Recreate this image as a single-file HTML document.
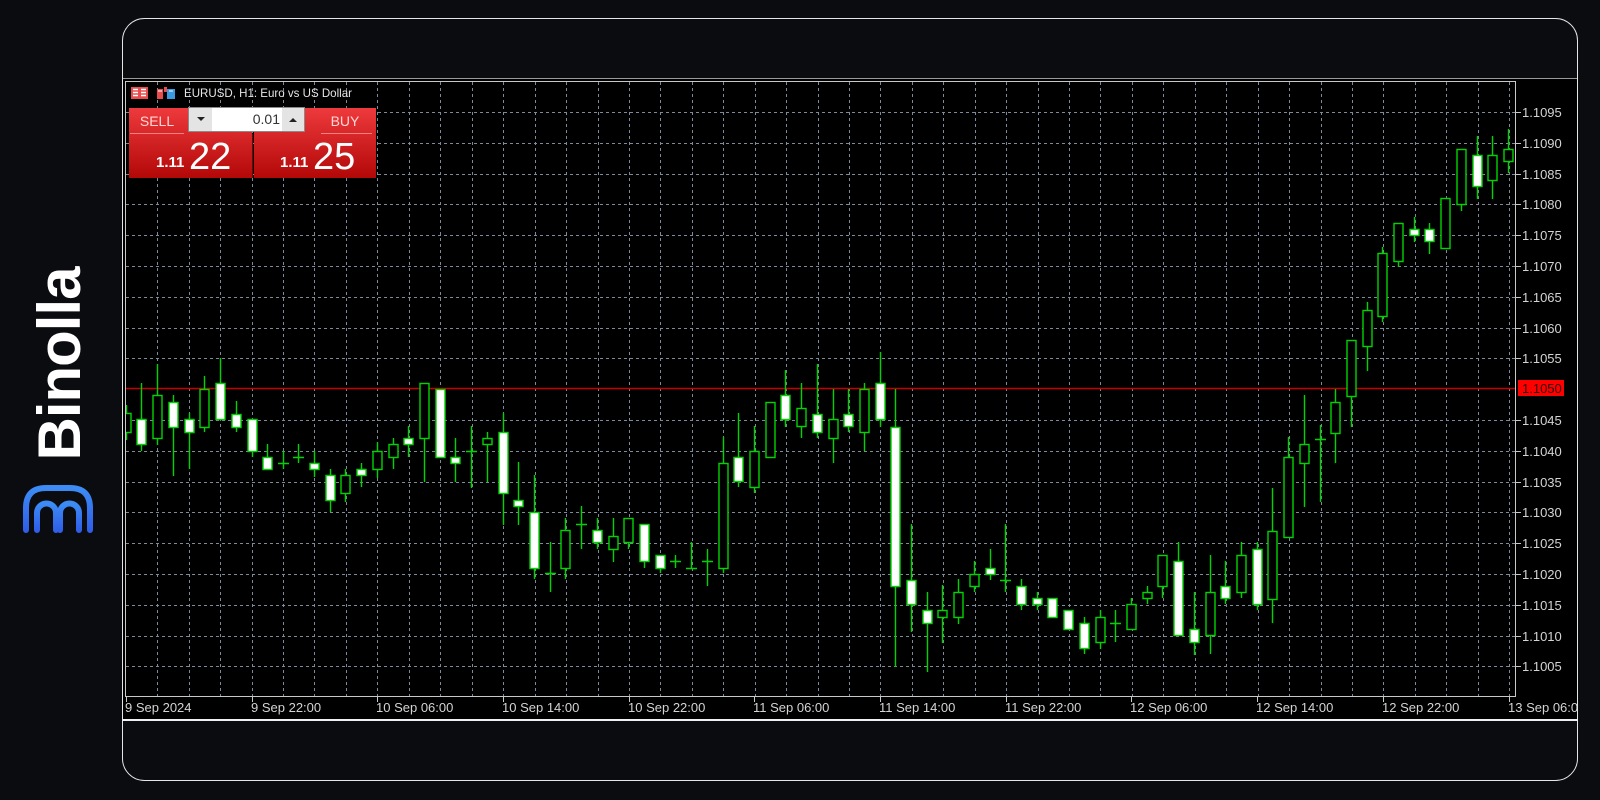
<!DOCTYPE html>
<html><head><meta charset="utf-8"><style>
html,body{margin:0;padding:0;background:#0b0c10;width:1600px;height:800px;overflow:hidden}
svg{display:block}
</style></head><body>
<svg width="1600" height="800" viewBox="0 0 1600 800" xmlns="http://www.w3.org/2000/svg" font-family="'Liberation Sans',sans-serif">
<defs>
<linearGradient id="lg" x1="0" y1="0" x2="0" y2="1"><stop offset="0" stop-color="#3d8cf5"/><stop offset="1" stop-color="#2f5fe8"/></linearGradient>
<linearGradient id="rg" x1="0" y1="0" x2="0" y2="1"><stop offset="0" stop-color="#ee3a3c"/><stop offset="1" stop-color="#b30808"/></linearGradient>
<clipPath id="plot"><rect x="126" y="82" width="1390" height="615"/></clipPath>
<clipPath id="chartc"><rect x="123" y="79" width="1454" height="641"/></clipPath>
</defs>
<rect x="0" y="0" width="1600" height="800" fill="#0b0c10"/>
<rect x="122.5" y="18.5" width="1455" height="762" rx="22" ry="22" fill="#0b0c10" stroke="#e6e6e6" stroke-width="1"/>
<rect x="123" y="78" width="1454" height="643" fill="#000"/>
<line x1="123" y1="78.5" x2="1577" y2="78.5" stroke="#9a9a9a"/>
<line x1="122" y1="720" x2="1578" y2="720" stroke="#f0f0f0" stroke-width="2"/>
<!-- logo -->
<text transform="translate(80,364) rotate(-90)" text-anchor="middle" font-size="60" font-weight="bold" fill="#fff" letter-spacing="-1">Binolla</text>
<g transform="translate(22,484)" fill="none" stroke="url(#lg)" stroke-width="6" stroke-linecap="round">
<path d="M4 46 V24 Q4 4 24 4 H48 Q68 4 68 24 V46"/>
<path d="M15 46 V29 a9.5 9.5 0 0 1 19 0 V46"/>
<path d="M38 46 V29 a9.5 9.5 0 0 1 19 0 V46"/>
</g>
<!-- grid -->
<g stroke="#7d8a99" stroke-width="1" stroke-dasharray="3,3" clip-path="url(#plot)">
<path d="M126 112.5H1516M126 143.5H1516M126 174.5H1516M126 204.5H1516M126 235.5H1516M126 266.5H1516M126 297.5H1516M126 328.5H1516M126 358.5H1516M126 420.5H1516M126 451.5H1516M126 482.5H1516M126 512.5H1516M126 543.5H1516M126 574.5H1516M126 605.5H1516M126 636.5H1516M126 666.5H1516"/>
<path d="M157.5 82V697M189.5 82V697M220.5 82V697M252.5 82V697M283.5 82V697M314.5 82V697M346.5 82V697M377.5 82V697M409.5 82V697M440.5 82V697M472.5 82V697M503.5 82V697M535.5 82V697M566.5 82V697M598.5 82V697M629.5 82V697M660.5 82V697M692.5 82V697M723.5 82V697M755.5 82V697M786.5 82V697M818.5 82V697M849.5 82V697M880.5 82V697M912.5 82V697M943.5 82V697M975.5 82V697M1006.5 82V697M1038.5 82V697M1069.5 82V697M1100.5 82V697M1132.5 82V697M1163.5 82V697M1195.5 82V697M1226.5 82V697M1258.5 82V697M1289.5 82V697M1321.5 82V697M1352.5 82V697M1383.5 82V697M1415.5 82V697M1446.5 82V697M1478.5 82V697M1509.5 82V697"/>
</g>
<line x1="126" y1="388.5" x2="1516" y2="388.5" stroke="#c40000" stroke-width="1.5"/>
<g clip-path="url(#plot)" stroke="#00d400" stroke-width="1.4">
<g fill="#fff">
<path d="M141.5 383V451M173.5 395V476M189.5 413V469M220.5 358V419M236.5 401V432M252.5 419V457M267.5 444V469M314.5 451V477M330.5 469V512M361.5 463V487M408.5 426V457M440.5 389V457M455.5 438V482M503.5 413V525M518.5 462V525M534.5 475V579M597.5 518V549M644.5 524V568M660.5 555V573M738.5 413V487M785.5 370V427M817.5 364V438M848.5 389V432M880.5 352V427M895.5 389V667M911.5 524V632M927.5 592V672M990.5 549V580M1021.5 579V610M1037.5 592V610M1052.5 598V617M1068.5 610V629M1084.5 617V654M1178.5 542V635M1194.5 592V655M1225.5 561V604M1257.5 542V610M1414.5 217V242M1429.5 223V254M1477.5 136V199"/>
<rect x="137" y="419.5" width="9" height="25"/><rect x="169" y="402.5" width="9" height="25"/><rect x="185" y="419.5" width="9" height="13"/><rect x="216" y="383.5" width="9" height="36"/><rect x="232" y="414.5" width="9" height="13"/><rect x="248" y="419.5" width="9" height="32"/><rect x="263" y="457.5" width="9" height="12"/><rect x="310" y="463.5" width="9" height="6"/><rect x="326" y="475.5" width="9" height="25"/><rect x="357" y="469.5" width="9" height="6"/><rect x="404" y="438.5" width="9" height="6"/><rect x="436" y="389.5" width="9" height="68"/><rect x="451" y="457.5" width="9" height="6"/><rect x="499" y="432.5" width="9" height="61"/><rect x="514" y="500.5" width="9" height="6"/><rect x="530" y="512.5" width="9" height="56"/><rect x="593" y="530.5" width="9" height="12"/><rect x="640" y="524.5" width="9" height="37"/><rect x="656" y="555.5" width="9" height="13"/><rect x="734" y="457.5" width="9" height="24"/><rect x="781" y="395.5" width="9" height="24"/><rect x="813" y="414.5" width="9" height="18"/><rect x="844" y="414.5" width="9" height="12"/><rect x="876" y="383.5" width="9" height="36"/><rect x="891" y="427.5" width="9" height="159"/><rect x="907" y="580.5" width="9" height="24"/><rect x="923" y="610.5" width="9" height="13"/><rect x="986" y="568.5" width="9" height="6"/><rect x="1017" y="586.5" width="9" height="18"/><rect x="1033" y="598.5" width="9" height="6"/><rect x="1048" y="598.5" width="9" height="19"/><rect x="1064" y="610.5" width="9" height="19"/><rect x="1080" y="623.5" width="9" height="25"/><rect x="1174" y="561.5" width="9" height="74"/><rect x="1190" y="629.5" width="9" height="13"/><rect x="1221" y="586.5" width="9" height="12"/><rect x="1253" y="549.5" width="9" height="55"/><rect x="1410" y="229.5" width="9" height="6"/><rect x="1425" y="229.5" width="9" height="12"/><rect x="1473" y="155.5" width="9" height="31"/>
</g>
<g fill="#000">
<path d="M126.5 405V440M157.5 364V445M204.5 376V432M345.5 469V502M377.5 442V478M393.5 438V469M424.5 383V482M487.5 432V482M565.5 518V579M613.5 518V562M628.5 518V549M723.5 437V573M754.5 426V493M770.5 402V457M801.5 383V438M833.5 389V463M864.5 383V451M942.5 585V643M958.5 579V624M974.5 561V592M1100.5 610V649M1131.5 598V629M1147.5 586V604M1162.5 555V598M1210.5 555V654M1241.5 542V598M1272.5 488V623M1288.5 437V537M1304.5 395V507M1335.5 389V463M1351.5 340V427M1367.5 302V371M1382.5 247V322M1398.5 223V267M1445.5 198V248M1461.5 149V211M1492.5 136V199M1508.5 129V173"/>
<rect x="122" y="413.5" width="9" height="19"/><rect x="153" y="395.5" width="9" height="43"/><rect x="200" y="389.5" width="9" height="38"/><rect x="341" y="475.5" width="9" height="18"/><rect x="373" y="451.5" width="9" height="18"/><rect x="389" y="444.5" width="9" height="13"/><rect x="420" y="383.5" width="9" height="55"/><rect x="483" y="438.5" width="9" height="6"/><rect x="561" y="530.5" width="9" height="38"/><rect x="609" y="536.5" width="9" height="13"/><rect x="624" y="518.5" width="9" height="24"/><rect x="719" y="463.5" width="9" height="105"/><rect x="750" y="451.5" width="9" height="36"/><rect x="766" y="402.5" width="9" height="55"/><rect x="797" y="408.5" width="9" height="18"/><rect x="829" y="419.5" width="9" height="19"/><rect x="860" y="389.5" width="9" height="43"/><rect x="938" y="610.5" width="9" height="7"/><rect x="954" y="592.5" width="9" height="25"/><rect x="970" y="574.5" width="9" height="12"/><rect x="1096" y="617.5" width="9" height="25"/><rect x="1127" y="604.5" width="9" height="25"/><rect x="1143" y="592.5" width="9" height="6"/><rect x="1158" y="555.5" width="9" height="31"/><rect x="1206" y="592.5" width="9" height="43"/><rect x="1237" y="555.5" width="9" height="37"/><rect x="1268" y="531.5" width="9" height="68"/><rect x="1284" y="457.5" width="9" height="80"/><rect x="1300" y="444.5" width="9" height="19"/><rect x="1331" y="402.5" width="9" height="31"/><rect x="1347" y="340.5" width="9" height="56"/><rect x="1363" y="310.5" width="9" height="36"/><rect x="1378" y="253.5" width="9" height="63"/><rect x="1394" y="223.5" width="9" height="38"/><rect x="1441" y="198.5" width="9" height="50"/><rect x="1457" y="149.5" width="9" height="55"/><rect x="1488" y="155.5" width="9" height="25"/><rect x="1504" y="149.5" width="9" height="12"/>
</g>
<path fill="none" d="M283.5 451V469M278 463.5H289M298.5 444V463M293 457.5H304M471.5 426V488M466 451.5H477M550.5 542V592M545 573.5H556M581.5 506V549M576 524.5H587M675.5 555V568M670 561.5H681M691.5 542V568M686 568.5H697M707.5 549V586M702 561.5H713M1005.5 524V592M1000 580.5H1011M1115.5 610V642M1110 623.5H1121M1320.5 425V502M1315 439.5H1326"/>
</g>
<rect x="125.5" y="81.5" width="1390" height="615" fill="none" stroke="#c8c8c8" stroke-width="1"/>
<g stroke="#c8c8c8"><path d="M1516 112.5h5M1516 143.5h5M1516 174.5h5M1516 204.5h5M1516 235.5h5M1516 266.5h5M1516 297.5h5M1516 328.5h5M1516 358.5h5M1516 420.5h5M1516 451.5h5M1516 482.5h5M1516 512.5h5M1516 543.5h5M1516 574.5h5M1516 605.5h5M1516 636.5h5M1516 666.5h5"/></g>
<g font-size="13" fill="#d4d4d4">
<text x="1522" y="117">1.1095</text><text x="1522" y="148">1.1090</text><text x="1522" y="179">1.1085</text><text x="1522" y="209">1.1080</text><text x="1522" y="240">1.1075</text><text x="1522" y="271">1.1070</text><text x="1522" y="302">1.1065</text><text x="1522" y="333">1.1060</text><text x="1522" y="363">1.1055</text><text x="1522" y="425">1.1045</text><text x="1522" y="456">1.1040</text><text x="1522" y="487">1.1035</text><text x="1522" y="517">1.1030</text><text x="1522" y="548">1.1025</text><text x="1522" y="579">1.1020</text><text x="1522" y="610">1.1015</text><text x="1522" y="641">1.1010</text><text x="1522" y="671">1.1005</text>
</g>
<rect x="1518" y="380" width="46" height="16" fill="#ff0000"/>
<text x="1522" y="393" font-size="13" fill="#300">1.1050</text>
<g stroke="#c8c8c8"><path d="M126.5 697v5M252.5 697v5M377.5 697v5M503.5 697v5M629.5 697v5M754.5 697v5M880.5 697v5M1006.5 697v5M1131.5 697v5M1257.5 697v5M1383.5 697v5M1509.5 697v5"/></g>
<g font-size="13" fill="#d4d4d4" clip-path="url(#chartc)">
<text x="125" y="712">9 Sep 2024</text><text x="251" y="712">9 Sep 22:00</text><text x="376" y="712">10 Sep 06:00</text><text x="502" y="712">10 Sep 14:00</text><text x="628" y="712">10 Sep 22:00</text><text x="753" y="712">11 Sep 06:00</text><text x="879" y="712">11 Sep 14:00</text><text x="1005" y="712">11 Sep 22:00</text><text x="1130" y="712">12 Sep 06:00</text><text x="1256" y="712">12 Sep 14:00</text><text x="1382" y="712">12 Sep 22:00</text><text x="1508" y="712">13 Sep 06:00</text>
</g>
<g>
<rect x="131" y="87" width="17" height="12" fill="#e84c4c"/>
<path d="M133 89.5h5M133 92.5h5M133 95.5h5M141 89.5h5M141 92.5h5M141 95.5h5" stroke="#fff" stroke-width="1.5"/>
<rect x="157" y="89" width="6" height="10" fill="#e84c4c"/><rect x="164" y="87" width="3" height="5" fill="#e84c4c"/><rect x="167" y="89" width="8" height="10" fill="#3a9be0"/><path d="M158 91h4M169 91h4" stroke="#fff"/>
<text x="184" y="97" font-size="12" fill="#e6e6e6" textLength="168" lengthAdjust="spacingAndGlyphs">EURUSD, H1:  Euro vs US Dollar</text>
</g>
<rect x="129" y="108" width="123" height="70" fill="url(#rg)"/>
<rect x="254" y="108" width="122" height="70" fill="url(#rg)"/>
<line x1="130" y1="133.5" x2="184" y2="133.5" stroke="#f48080"/>
<line x1="321" y1="133.5" x2="372" y2="133.5" stroke="#f48080"/>
<text x="157" y="126" font-size="14" fill="#ffd6d6" text-anchor="middle">SELL</text>
<text x="345" y="126" font-size="14" fill="#ffd6d6" text-anchor="middle">BUY</text>
<rect x="188.5" y="107.5" width="116" height="24" fill="#fff" stroke="#8a8a8a"/>
<rect x="189" y="108" width="23" height="23" fill="#e4e4e4"/><rect x="282" y="108" width="22" height="23" fill="#e4e4e4"/>
<path d="M197 117l4 4 4-4z M289 122l4-4 4 4z" fill="#222"/>
<text x="280" y="124" font-size="14" fill="#333" text-anchor="end">0.01</text>
<line x1="252.5" y1="134" x2="252.5" y2="178" stroke="#7a0000"/>
<text x="156" y="167" font-size="15" font-weight="bold" fill="#fff">1.11</text>
<text x="189" y="169" font-size="38" fill="#fff">22</text>
<text x="280" y="167" font-size="15" font-weight="bold" fill="#fff">1.11</text>
<text x="313" y="169" font-size="38" fill="#fff">25</text>
</svg>
</body></html>
